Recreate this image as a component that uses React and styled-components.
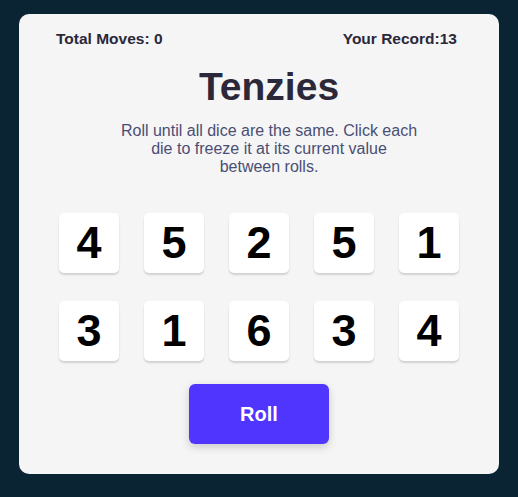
import React from "react";
import styled, { createGlobalStyle } from "styled-components";

const Global = createGlobalStyle`
  html, body { margin: 0; padding: 0; }
  body {
    background: #0B2434;
    font-family: "Liberation Sans", Arial, sans-serif;
  }
`;

const Page = styled.div`
  width: 518px;
  height: 497px;
  padding: 14px 0 0 19px;
  box-sizing: border-box;
`;

const Card = styled.main`
  width: 480px;
  height: 460px;
  background: #F5F5F5;
  border-radius: 10px;
  box-sizing: border-box;
  display: flex;
  flex-direction: column;
  align-items: center;
  padding-top: 15px;
`;

const Header = styled.div`
  align-self: flex-start;
  margin-left: 37px;
  width: 401px;
  display: flex;
  justify-content: space-between;
  font-size: 15.5px;
  font-weight: 700;
  color: #2B283A;
  line-height: 20px;
`;

const Intro = styled.div`
  display: flex;
  flex-direction: column;
  align-items: center;
  padding-left: 20px;
`;

const Title = styled.h1`
  margin: 15px 0 0;
  font-size: 39px;
  line-height: 46px;
  font-weight: 700;
  color: #2B283A;
`;

const Desc = styled.p`
  margin: 12px 0 0;
  max-width: 298px;
  text-align: center;
  font-size: 16px;
  line-height: 18px;
  color: #4A4E74;
`;

const Grid = styled.div`
  margin-top: 37px;
  display: grid;
  grid-template-columns: repeat(5, 60px);
  column-gap: 25px;
  row-gap: 28px;
`;

const Die = styled.button`
  width: 60px;
  height: 60px;
  border: none;
  border-radius: 5px;
  background: ${(p) => (p.$held ? "#59E391" : "#FFFFFF")};
  box-shadow: 0 2px 2px rgba(0, 0, 0, 0.15);
  font-family: "Liberation Sans", Arial, sans-serif;
  font-size: 45px;
  font-weight: 700;
  color: #000;
  padding: 0;
  display: flex;
  align-items: center;
  justify-content: center;
  cursor: pointer;
`;

const RollButton = styled.button`
  margin-top: 23px;
  width: 140px;
  height: 60px;
  border: none;
  border-radius: 6px;
  background: #5035FF;
  color: #fff;
  font-family: "Liberation Sans", Arial, sans-serif;
  font-size: 20px;
  font-weight: 700;
  box-shadow: 0 3px 8px rgba(0, 0, 0, 0.18);
  cursor: pointer;
`;

const dice = [4, 5, 2, 5, 1, 3, 1, 6, 3, 4];

export default function App() {
  return (
    <Page>
      <Global />
      <Card>
        <Header>
          <span>Total Moves: 0</span>
          <span>Your Record:13</span>
        </Header>
        <Intro>
          <Title>Tenzies</Title>
          <Desc>
            Roll until all dice are the same. Click each die to freeze it at its
            current value between rolls.
          </Desc>
        </Intro>
        <Grid>
          {dice.map((v, i) => (
            <Die key={i}>{v}</Die>
          ))}
        </Grid>
        <RollButton>Roll</RollButton>
      </Card>
    </Page>
  );
}
